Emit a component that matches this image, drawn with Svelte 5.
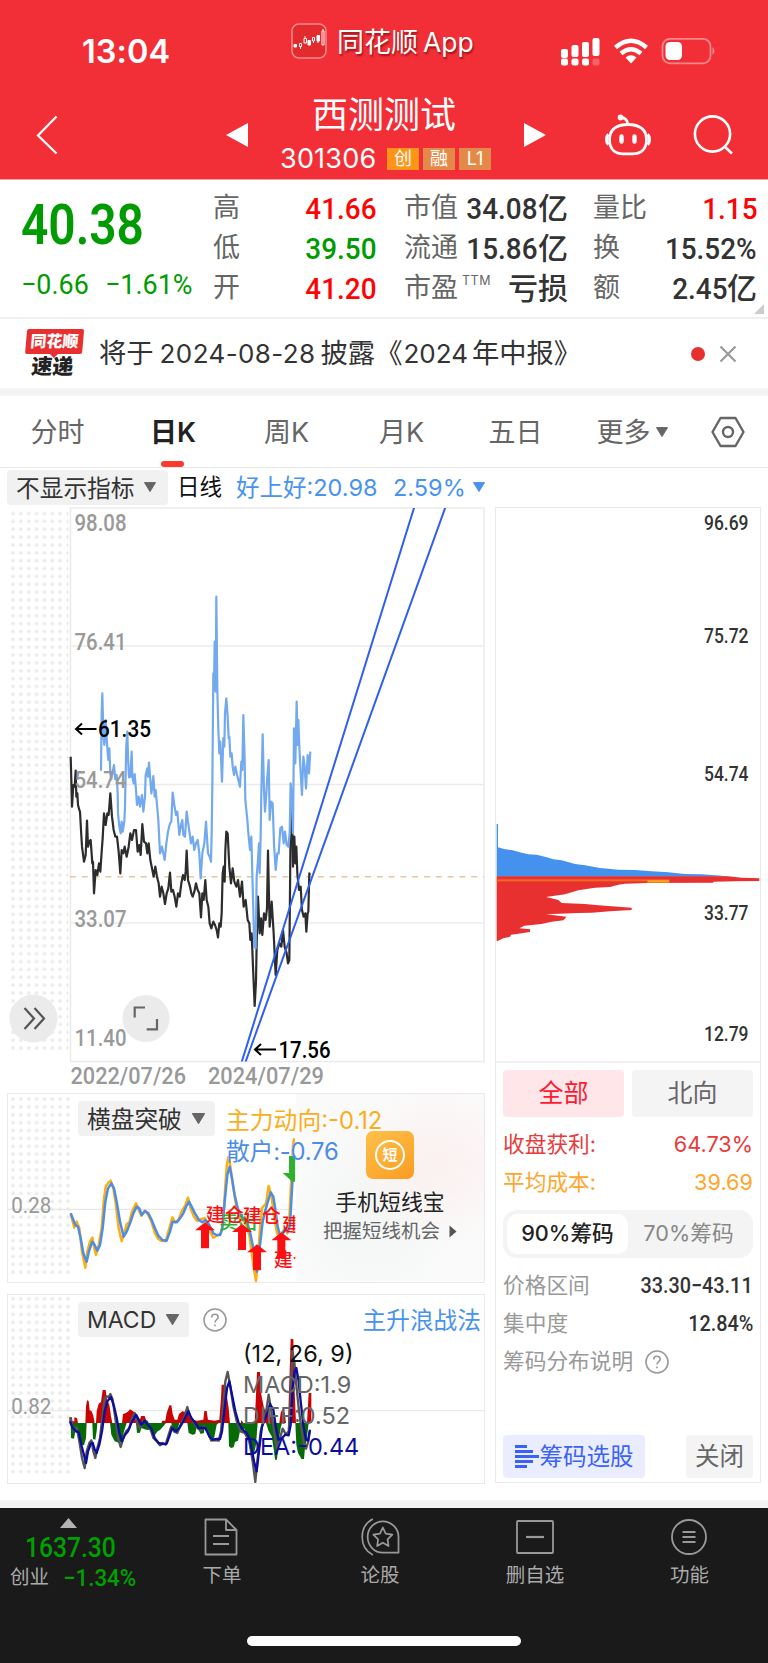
<script>
	const quoteColumns = [
		[
			{ label: '高', value: '41.66', tone: 'up' },
			{ label: '低', value: '39.50', tone: 'down' },
			{ label: '开', value: '41.20', tone: 'up' }
		],
		[
			{ label: '市值', value: '34.08', unit: '亿' },
			{ label: '流通', value: '15.86', unit: '亿' },
			{ label: '市盈', sup: 'TTM', value: '', unit: '亏损' }
		],
		[
			{ label: '量比', value: '1.15', tone: 'up' },
			{ label: '换', value: '15.52%' },
			{ label: '额', value: '2.45', unit: '亿' }
		]
	];

	const tabs = ['分时', '日K', '周K', '月K', '五日', '更多'];
	let activeTab = '日K';

	const priceLabels = [
		['98.08', 530.5],
		['76.41', 649.5],
		['54.74', 788],
		['33.07', 926.5],
		['11.40', 1045.5]
	];
	const chipLabels = [
		['96.69', 530],
		['75.72', 642.5],
		['54.74', 781],
		['33.77', 919.5],
		['12.79', 1040.5]
	];

	// series are stored in a 3x grid, each chart scales them down
	const blueSeries =
		'123,812 125,640 127,580 130,700 133,735 137,660 141,730 145,780 148,745 151,820 154,838 158,815 162,795 166,838 170,825 173,880 174,940 178,980 182,1000 185,965 188,995 193,965 195,920 197,820 199,735 202,695 204,770 207,832 211,830 215,755 217,830 221,850 224,822 228,870 231,915 236,890 240,920 246,885 250,935 255,890 257,825 262,805 264,830 267,788 271,840 274,880 277,860 280,828 284,890 287,870 291,915 295,960 300,1060 306,1040 314,1080 319,1030 324,995 330,970 334,965 338,878 343,915 348,945 352,935 358,1005 363,975 367,960 370,1005 375,1010 380,935 384,965 389,1000 393,1030 398,1010 403,1050 408,1030 413,1020 418,1060 422,1135 427,1060 433,1030 438,965 444,1060 449,1070 453,1085 455,1000 457,860 460,520 462,570 464,425 467,575 469,290 472,570 475,690 478,760 481,725 486,845 490,715 493,740 495,640 499,595 503,650 506,715 508,710 511,770 515,760 518,800 522,825 526,800 530,820 535,840 540,860 544,785 547,810 550,645 554,780 556,900 562,960 566,1010 570,1050 574,1010 578,1160 583,1340 587,1345 590,1130 594,1080 597,1030 599,1120 602,1010 604,880 608,703 612,870 615,935 619,880 622,830 626,780 629,960 633,905 638,910 642,1030 647,1110 652,1060 656,1060 661,985 666,980 671,1030 675,995 680,1035 685,1040 689,1000 692,850 696,900 699,1000 702,685 706,790 710,605 713,735 715,660 718,740 721,800 726,885 730,770 734,800 738,865 743,765 747,820 751,755';
	const closeSeries =
		'32,770 34,840 36,920 40,855 44,860 47,812 49,890 52,880 54,915 58,930 60,935 63,990 66,1040 72,1085 77,1065 81,962 84,1040 88,1025 92,1020 97,1090 99,1085 102,1180 107,1110 112,1125 117,1090 121,1115 125,1055 128,1015 132,940 137,975 142,940 146,945 151,880 156,950 161,990 166,1010 171,1010 176,1055 181,1120 185,1050 190,1060 194,1040 200,1070 206,1040 211,1000 216,1020 222,990 228,990 233,1055 238,1035 242,1065 247,972 252,1025 258,1030 262,1060 266,1030 271,1080 276,1105 281,1130 286,1100 291,1130 296,1150 300,1190 305,1160 310,1180 315,1212 320,1180 325,1165 330,1118 334,1175 339,1170 344,1190 349,1220 354,1180 359,1190 364,1150 369,1125 374,1140 377,1115 380,1052 384,1140 390,1160 394,1180 398,1190 403,1175 408,1150 413,1170 418,1180 423,1252 427,1180 431,1200 436,1140 440,1200 445,1220 449,1270 454,1285 460,1265 465,1275 470,1290 474,1312 478,1270 482,1280 485,1240 488,1120 491,1100 494,1145 496,1050 499,995 503,1000 508,1100 513,1150 518,1105 523,1145 529,1160 534,1140 540,1190 546,1145 551,1220 557,1200 563,1260 568,1270 571,1320 575,1300 579,1400 584,1518 588,1445 590,1330 594,1190 599,1300 603,1255 607,1305 612,1240 617,1260 621,1225 624,1052 629,1280 635,1205 641,1300 647,1425 652,1350 658,1330 664,1340 669,1290 674,1340 680,1360 684,1390 688,1380 690,1180 692,960 696,915 699,1100 703,1010 706,1090 709,1040 712,1120 717,1170 722,1160 726,1230 731,1250 736,1240 739,1295 743,1240 745,1235 748,1120 750,1125';
	const retailLine =
		'212,385 218,400 226,420 234,425 242,460 250,505 260,530 268,495 277,470 284,480 292,497 300,480 308,430 316,350 324,310 334,295 342,310 350,350 360,410 371,455 380,440 390,415 400,385 410,365 418,370 425,390 435,378 445,385 455,405 465,430 475,452 487,465 500,467 510,440 518,410 530,412 540,400 550,385 558,365 567,350 575,365 585,385 597,405 607,412 617,405 628,420 640,445 650,450 660,450 667,430 674,350 682,270 689,245 696,280 704,330 712,365 720,390 730,400 740,410 750,440 760,490 771,560 780,480 788,410 795,380 805,345 812,322 820,335 827,380 833,425 840,450 848,445 856,430 863,440 870,420 875,330 880,240 886,210';
	const mainLine =
		'212,385 217,405 223,428 230,410 238,430 246,500 256,548 262,500 270,470 277,458 283,490 288,510 296,480 305,430 312,340 317,305 325,293 332,287 340,310 348,360 356,430 365,468 374,440 380,418 388,412 396,380 408,355 416,375 424,392 435,377 445,390 455,412 465,445 475,462 485,468 497,468 508,430 517,397 526,412 535,405 545,380 556,360 564,338 572,370 582,395 592,408 603,402 615,400 625,430 640,458 655,450 663,445 670,400 676,300 681,235 686,215 692,250 700,310 710,370 720,400 735,410 748,450 760,540 768,588 774,520 780,430 786,370 798,355 806,303 814,330 822,390 830,440 838,460 848,440 855,430 862,445 868,400 874,280 879,180 883,160';
	const diffLine =
		'212,398 216,420 222,440 230,428 238,470 246,520 254,550 260,500 268,475 274,467 280,500 286,520 292,490 300,460 308,390 314,340 320,335 326,338 331,328 338,345 346,400 354,460 362,487 370,460 378,440 388,430 396,400 404,385 412,420 420,432 430,408 440,410 450,430 460,460 472,472 480,482 488,475 497,480 506,450 514,425 522,440 532,445 540,425 552,400 562,367 570,395 580,410 592,430 602,437 612,425 622,440 634,468 645,466 656,468 663,440 670,360 676,290 683,262 690,300 700,365 710,410 722,440 734,445 748,470 758,530 766,592 773,520 782,440 792,405 800,370 806,330 814,380 822,440 830,490 840,460 848,432 858,450 866,440 871,370 877,200 883,230 888,290 896,370 904,430 911,475 918,492 925,470 929,440';
	const deaLine =
		'210,410 218,430 228,440 236,442 244,480 258,535 264,500 272,478 278,474 284,495 290,505 298,480 306,440 314,380 322,350 333,337 342,365 350,400 358,445 366,470 374,452 384,440 394,415 408,390 416,405 424,420 434,408 444,420 454,432 464,460 476,475 487,478 500,477 508,455 516,430 528,440 538,430 550,410 565,380 574,400 584,412 596,430 606,430 616,430 628,455 638,465 650,463 660,463 666,440 674,370 681,310 688,290 696,330 706,380 716,415 728,435 740,445 750,465 762,530 770,560 778,490 786,425 796,400 804,380 810,358 820,375 828,430 836,465 846,460 856,450 866,452 872,420 878,310 884,260 889,250 896,290 902,350 910,420 918,465 924,468 930,435';
	const macdUp =
		'208,415 208,398 215,398 215,410 223,410 223,398 231,400 234,415 256,415 258,365 261,347 266,349 269,377 275,380 280,393 284,415 288,415 290,380 296,357 303,352 308,316 317,316 321,345 328,360 333,395 337,415 366,415 369,388 378,385 386,379 390,374 397,378 405,384 412,395 420,405 423,394 434,394 438,405 446,415 484,415 487,408 496,408 500,385 508,362 514,362 518,388 524,405 532,405 537,388 547,380 556,382 563,372 568,390 576,405 592,408 610,405 613,379 620,379 624,405 644,408 658,405 663,340 665,300 674,300 678,318 686,370 690,415 722,415 724,406 730,415 764,415 768,330 771,262 780,262 784,330 792,370 798,385 815,392 818,415 838,415 842,385 849,370 854,385 858,415 864,415 868,290 872,162 880,164 884,320 888,415 921,415 924,360 926,325 934,325 934,415';
	const macdDown =
		'212,415 213,460 222,462 226,440 238,440 243,480 252,482 258,460 260,415 277,415 279,463 286,465 290,440 292,415 330,415 334,450 344,470 358,475 366,470 372,440 380,415 408,415 411,445 420,444 424,430 438,435 455,437 462,455 473,440 480,436 490,425 498,415 514,415 518,438 526,442 534,430 538,415 562,415 566,445 578,450 586,448 590,425 602,448 612,445 614,425 628,455 642,462 650,420 656,415 685,415 687,485 693,490 701,488 705,472 714,468 720,440 734,432 745,470 752,500 760,515 768,480 773,415 798,415 806,440 815,455 822,500 825,525 831,525 836,470 842,430 846,415 886,415 889,480 894,505 900,515 904,523 912,523 915,490 922,450 926,415';

	const buyArrows = [
		[615, 412],
		[726, 417],
		[771, 478],
		[844, 442]
	];
	const buyLabels = [
		[617, 410],
		[728, 415],
		[846, 440],
		[821, 547]
	];

	const arrowPath = 'M0 0L30 24H12V78H-12V24H-30Z';
</script>

{#snippet caret(size, color)}
	<svg class="caret" width={size} height={size * 0.85} viewBox="0 0 12 10">
		<path d="M0.5 0.5H11.5L6 9.5Z" fill={color} stroke={color} stroke-linejoin="round" />
	</svg>
{/snippet}

{#snippet help()}
	<svg width="24" height="24" viewBox="0 0 24 24" fill="none" stroke="#999" stroke-width="1.6">
		<circle cx="12" cy="12" r="11" />
		<path d="M8.7 9.4C8.7 5.2 15.2 5.4 15.2 9.2C15.2 11.6 12 11.7 12 14.4M12 16.4V18.2" />
	</svg>
{/snippet}

<div class="page">
	<header>
		<div class="status">
			<span class="time">13:04</span>
			<div class="app">
				<svg width="36" height="36" viewBox="0 0 36 36">
					<rect x="1" y="1" width="34" height="34" rx="7" fill="#e32a2d" stroke="#f68b8e" stroke-width="1.5" />
					<g fill="#fff" stroke="#fff">
						<path d="M3 21.5H5.5V24H3ZM17 17.5H19.5V22H17ZM26 12.5H28.5V18H26Z" />
						<path d="M8.5 20.5H10.5V23.5H8.5ZM13 15.5H15.5V20H13ZM21.5 14.5H23.5V18H21.5ZM31 8H33V22H31Z" fill="none" />
						<path d="M9.5 24V26M14 13V15.5M22.5 18V20M27 18V20M32 6V8" />
					</g>
				</svg>
				<span>同花顺<b>App</b></span>
			</div>
			<svg class="signals" width="156" height="30" viewBox="0 0 156 30">
				<g fill="#fff">
					<rect x="1" y="12" width="7" height="9" rx="2" />
					<rect x="11.5" y="9" width="7" height="12" rx="2" transform="translate(0 -1)" />
					<rect x="22" y="5" width="7" height="15" rx="2" />
					<rect x="32.5" y="1" width="7" height="18" rx="2" />
					<rect x="1" y="21.5" width="7" height="7" rx="2" />
					<rect x="11.5" y="21.5" width="7" height="7" rx="2" />
					<rect x="22" y="21.5" width="7" height="7" rx="2" />
					<rect x="32.5" y="21.5" width="7" height="7" rx="2" opacity="0.25" />
				</g>
				<g fill="none" stroke="#fff" stroke-width="4.4">
					<path d="M55.5 10.5Q71 -3 86.500 10.5" />
					<path d="M61 16.5Q71 8 81 16.5" />
				</g>
				<path d="M65.5 20.5Q71 16 76.500 20.500L71 26.500Z" fill="#fff" />
				<rect x="102.500" y="1.800" width="48" height="24.500" rx="7.500" fill="none" stroke="#f7878b" stroke-width="1.800" />
				<rect x="105.500" y="5" width="16.500" height="18" rx="4.500" fill="#fff" />
				<path d="M152.500 10Q156.500 14 152.500 18Z" fill="#f7878b" />
			</svg>
		</div>
		<nav>
			<svg class="back" width="22" height="40" viewBox="0 0 22 40"><path d="M20.500 1.500L2 20.500L20.500 38.500" fill="none" stroke="#fff" stroke-width="2.200" /></svg>
			<svg class="prev" width="22" height="24" viewBox="0 0 22 24"><path d="M0 12L22 0V24Z" fill="#fff" /></svg>
			<div class="stock">
				<h1>西测测试</h1>
				<div class="code">
					<span>301306</span>
					<i class="hot">创</i><i>融</i><i>L1</i>
				</div>
			</div>
			<svg width="22" height="24" viewBox="0 0 22 24"><path d="M22 12L0 0V24Z" fill="#fff" /></svg>
			<svg class="robot" width="46" height="42" viewBox="0 0 46 42" fill="none" stroke="#fff" stroke-width="2.800">
				<path d="M23 10.500C11 10.500 4.500 16 4.500 25.500C4.500 35 10 39.800 18 39.800H28C36 39.800 41.500 35 41.500 25.500C41.500 16 35 10.500 23 10.500Z" />
				<path d="M22.500 10.500C23 6.500 20.500 4 16 3.500" stroke-linecap="round" />
				<circle cx="15.500" cy="3.400" r="2.800" fill="#fff" stroke="none" />
				<path d="M3.500 20.500C0.800 22 0.800 29 3.500 30.500M42.500 20.500C45.200 22 45.200 29 42.500 30.500" />
				<path d="M16.500 22.500V27.500M29.500 22.500V27.500" stroke-width="4.400" stroke-linecap="round" />
			</svg>
			<svg class="search" width="42" height="42" viewBox="0 0 42 42" fill="none" stroke="#fff" stroke-width="2.600">
				<circle cx="19.500" cy="20" r="17.600" />
				<path d="M31.500 32.500L39 39.500" />
			</svg>
		</nav>
	</header>

	<section class="quote">
		<div class="last">
			<span class="din price">40.38</span>
			<div class="change"><span class="din">−0.66</span><span class="din">−1.61%</span></div>
		</div>
		{#each quoteColumns as column}
			<div class="col">
				{#each column as row}
					<div class="row">
						<span class="label">{row.label}{#if row.sup}<sup>{row.sup}</sup>{/if}</span>
						<span class="value {row.tone ?? ''}"><span class="din">{row.value}</span>{row.unit ?? ''}</span>
					</div>
				{/each}
			</div>
		{/each}
		<svg class="corner" width="10" height="10" viewBox="0 0 10 10"><path d="M10 0V10H0Z" fill="#ccc" /></svg>
	</section>

	<section class="news">
		<div class="badge">
			<span class="badge-top">同花顺</span>
			<span class="badge-bottom">速递</span>
		</div>
		<p>将于<span class="date">2024-08-28</span>披露<span class="book">《</span><span class="year">2024</span>年中报》</p>
		<span class="dot"></span>
		<svg width="18" height="18" viewBox="0 0 18 18"><path d="M1.500 1.500L16.500 16.500M16.500 1.500L1.500 16.500" stroke="#999" stroke-width="2.200" /></svg>
	</section>

	<div class="tabs">
		{#each tabs as tab}
			<button class:active={tab === activeTab} on:click={() => (activeTab = tab)}>
				{tab}{#if tab === '更多'}{@render caret(12, '#666')}{/if}
			</button>
		{/each}
		<svg width="34" height="32" viewBox="0 0 34 32" fill="none" stroke="#666" stroke-width="2.400" stroke-linejoin="round">
			<path d="M9.500 2H24.500L32.500 16L24.500 30H9.500L1.500 16Z" />
			<circle cx="17" cy="16" r="5" />
		</svg>
	</div>

	<div class="indicator">
		<button class="pill">不显示指标{@render caret(12, '#666')}</button>
		<span class="period">日线</span>
		<span class="signal">好上好:20.98</span>
		<span class="signal pct">2.59%</span>
		{@render caret(12, '#4793f0')}
	</div>

	<main>
		<div class="left">
			<div class="panel">
				<svg width="478" height="583" viewBox="7 507 478 583">
					<defs>
						<pattern id="dots" x="9" y="509.500" width="7.860" height="7.860" patternUnits="userSpaceOnUse">
							<circle cx="4" cy="4" r="1.900" fill="#ebebeb" />
						</pattern>
						<clipPath id="price-clip"><rect x="69" y="508" width="416" height="553.500" /></clipPath>
					</defs>
					<rect x="9" y="509.500" width="59.500" height="543" fill="url(#dots)" />
					<g stroke="#ebebeb" stroke-width="1.500" fill="none">
						<rect x="70.500" y="508" width="413.500" height="553.500" />
						<path d="M70 646H484M70 784.500H484M70 923H484" />
					</g>
					<path d="M70 876.700H484" stroke="#e8c79b" stroke-width="1.400" stroke-dasharray="6 5.800" />
					<g transform="translate(60 500) scale(0.33333)" fill="none" stroke-width="6.600" stroke-linejoin="round">
						<polyline points={closeSeries} stroke="#2c2c2c" />
						<polyline points={blueSeries} stroke="#72a9ef" />
					</g>
					<g class="axis">
						{#each priceLabels as [text, y]}
							<text x="74.500" {y} textLength="52" lengthAdjust="spacingAndGlyphs">{text}</text>
						{/each}
						<text x="70.500" y="1084" textLength="115.500" lengthAdjust="spacingAndGlyphs">2022/07/26</text>
						<text x="208" y="1084" textLength="116" lengthAdjust="spacingAndGlyphs">2024/07/29</text>
					</g>
					<g clip-path="url(#price-clip)" stroke="#2f5ff0" stroke-width="2">
						<path d="M241.700 1062L414.300 507M245.500 1062L445.500 507" />
					</g>
					<circle cx="146" cy="1018.500" r="23.500" fill="#ebebeb" />
					<path d="M134.700 1017.500V1007.500H145M146.700 1029.300H157V1019" fill="none" stroke="#666" stroke-width="2.200" />
					<circle cx="33.500" cy="1018.500" r="24" fill="#ebebeb" />
					<path d="M24.500 1008L34 1018.500L24.500 1029M34.500 1008L44 1018.500L34.500 1029" fill="none" stroke="#555" stroke-width="2.200" />
					<g class="mark">
						<path d="M96.500 729H76M82 723.500L76 729L82 734.500" />
						<text x="98" y="737" textLength="53" lengthAdjust="spacingAndGlyphs">61.35</text>
						<path d="M276 1049.500H255M261 1044L255 1049.500L261 1055" />
						<text x="278.500" y="1057.500" textLength="52" lengthAdjust="spacingAndGlyphs">17.56</text>
					</g>
				</svg>
			</div>

			<div class="panel sub">
				<svg width="478" height="190" viewBox="21 24 1434 570">
					<defs>
						<pattern id="dots-sub" x="27" y="30" width="23.600" height="23.600" patternUnits="userSpaceOnUse">
							<circle cx="12" cy="12" r="5.700" fill="#ebebeb" />
						</pattern>
						<clipPath id="flow-clip"><rect x="21" y="24" width="865" height="568" /></clipPath>
					</defs>
					<rect x="27" y="30" width="189" height="543" fill="url(#dots-sub)" />
					<path d="M22 373H886" stroke="#e8e8e8" stroke-width="4" />
					<text class="sub-axis" x="34" y="383" textLength="120" lengthAdjust="spacingAndGlyphs">0.28</text>
					<g clip-path="url(#flow-clip)">
						<g fill="none" stroke-width="7.500" stroke-linejoin="round">
							<polyline points={mainLine} stroke="#ffae0d" />
							<polyline points={retailLine} stroke="#4c8de8" />
						</g>
						<text class="flow-text" x="658" y="432" fill="#2fb12f">卖出</text>
						<path d="M867 213H886V290H877L848 264H867Z" fill="#2fb12f" />
						{#each buyArrows as [x, y]}
							<path d={arrowPath} transform="translate({x} {y})" fill="#fb0f12" />
						{/each}
						{#each buyLabels as [x, y]}
							<text class="flow-text" {x} {y} fill="#fb0f12">建仓</text>
						{/each}
					</g>
				</svg>
				<div class="promo">
					<span class="coin"><em>短</em></span>
					<strong>手机短线宝</strong>
					<small>把握短线机会<svg width="8" height="13" viewBox="0 0 8 13"><path d="M0.500 0.500L7.500 6.500L0.500 12.500Z" fill="#555" /></svg></small>
				</div>
				<div class="tools">
					<button class="pill">横盘突破{@render caret(13, '#666')}</button>
				</div>
				<div class="legend flow">
					<span style:color="#faae1e">主力动向:-0.12</span>
					<span class="retail" style:color="#4c8de8">散户:-0.76</span>
				</div>
			</div>

			<div class="panel sub macd">
				<svg width="478" height="190" viewBox="21 28 1434 570">
					<rect x="27" y="30" width="189" height="547" fill="url(#dots-sub)" />
					<path d="M22 378H1455" stroke="#e8e8e8" stroke-width="4" />
					<text class="sub-axis" x="34" y="387" textLength="120" lengthAdjust="spacingAndGlyphs">0.82</text>
					<polygon points={macdUp} fill="#c90303" />
					<polygon points={macdDown} fill="#066b06" />
					<g fill="none" stroke-width="7" stroke-linejoin="round">
						<polyline points={diffLine} stroke="#555" />
						<polyline points={deaLine} stroke="#0d0d9c" />
					</g>
				</svg>
				<div class="tools">
					<button class="pill macd-pill">MACD{@render caret(13, '#666')}</button>
					{@render help()}
					<a href="#top">主升浪战法</a>
				</div>
				<div class="legend values">
					<span style:color="#111">(12, 26, 9)</span>
					<span style:color="#666">MACD:1.9</span>
					<span style:color="#666">DIFF:0.52</span>
					<span style:color="#0d0d9c">DEA:-0.44</span>
				</div>
			</div>
		</div>

		<aside>
			<svg width="264" height="553" viewBox="496 508 264 553">
				<g class="chip-axis">
					{#each chipLabels as [text, y]}
						<text x="704" {y} textLength="44.500" lengthAdjust="spacingAndGlyphs">{text}</text>
					{/each}
				</g>
				<g transform="translate(485 800) scale(0.33333)">
					<polygon fill="#4591ee" points="35,72 39,72 39,142 60,148 80,150 110,158 130,163 155,164 185,172 205,178 230,181 270,192 300,196 345,204 400,209 450,210 500,214 550,217 600,222 650,223 710,227 730,230 35,230" />
					<polygon fill="#e83030" points="35,229 730,229 770,233 823,235 823,243 750,244 685,245 685,248 487,249 420,251 400,254 375,261 330,263 280,271 240,283 183,291 220,300 230,309 300,312 340,316 440,323 440,330 375,334 320,338 280,339 183,343 245,350 235,361 200,365 170,372 118,377 103,385 135,388 135,396 100,401 78,404 75,410 55,415 38,423 35,423" />
					<rect x="35" y="238" width="452" height="6" fill="#f06a20" />
					<rect x="487" y="239" width="66" height="9" fill="#fba01c" />
				</g>
			</svg>
			<div class="chips">
				<div class="scope">
					<button class="on">全部</button>
					<button>北向</button>
				</div>
				<div class="line red"><span>收盘获利:</span><span>64.73%</span></div>
				<div class="line orange"><span>平均成本:</span><span>39.69</span></div>
				<div class="segment">
					<button class="on">90%筹码</button>
					<button>70%筹码</button>
				</div>
				<div class="line"><span>价格区间</span><b class="din">33.30−43.11</b></div>
				<div class="line"><span>集中度</span><b class="din">12.84%</b></div>
				<div class="line note"><span>筹码分布说明</span>{@render help()}</div>
				<div class="actions">
					<button class="pick">
						<svg width="24" height="23" viewBox="0 0 24 23" stroke="#3a62f5" stroke-width="2.800"><path d="M0 1.500H12M0 6.500H18M0 11.500H24M0 16.500H18M0 21.500H12" /></svg>筹码选股
					</button>
					<button class="close">关闭</button>
				</div>
			</div>
		</aside>
	</main>

	<footer>
		<div class="bar">
			<div class="index">
				<svg width="17" height="10" viewBox="0 0 17 10"><path d="M8.500 0L17 10H0Z" fill="#b3b3b3" /></svg>
				<span class="din point">1637.30</span>
				<div><span>创业</span><span class="din">−1.34%</span></div>
			</div>
			<div class="item">
				<svg width="40" height="38" viewBox="0 0 40 38">
					<path d="M3.500 1.500H24L34.500 12V36.500H3.500ZM24 1.500V12H34.500M11 18H27M11 26H27" />
				</svg>
				<span>下单</span>
			</div>
			<div class="item">
				<svg width="42" height="40" viewBox="0 0 42 40">
					<path d="M24 3.500C15 3.500 8 11 8 20C8 29 15 36.500 24 36.500H40.500V20C40.500 11 33 3.500 24 3.500Z" />
					<path d="M13.500 1C-1.500 9 -1.500 31 13.500 39" />
					<path d="M24 10L27 16.500L34 17.500L29 22.500L30 29.500L24 26L18 29.500L19 22.500L14 17.500L21 16.500Z" />
				</svg>
				<span>论股</span>
			</div>
			<div class="item">
				<svg width="40" height="38" viewBox="0 0 40 38">
					<rect x="2" y="3" width="36" height="32" rx="1" />
					<path d="M11 19H29" stroke-width="2.200" />
				</svg>
				<span>删自选</span>
			</div>
			<div class="item">
				<svg width="40" height="38" viewBox="0 0 40 38">
					<circle cx="19" cy="19" r="17" />
					<path d="M12.500 14H25.500M12.500 19H25.500M12.500 24H25.500" />
				</svg>
				<span>功能</span>
			</div>
		</div>
		<div class="home"></div>
	</footer>
</div>

<style>
	:global(body) {
		background: #fff;
	}

	.page {
		width: 768px;
		height: 1663px;
		overflow: hidden;
		display: flex;
		flex-direction: column;
		box-sizing: border-box;
		background: #fff;
		color: #333;
		font-family: Inter, 'Noto Sans CJK SC', sans-serif;
		line-height: 1;
	}

	.page :global(*) {
		box-sizing: border-box;
	}

	svg {
		display: block;
		flex: none;
	}

	button {
		border: none;
		padding: 0;
		margin: 0;
		background: none;
		font: inherit;
		color: inherit;
		white-space: nowrap;
	}

	.din {
		display: inline-block;
		font-family: Roboto, 'Noto Sans CJK SC', sans-serif;
		font-weight: 500;
		transform: scaleX(0.93);
		transform-origin: right center;
	}

	/* header */
	header {
		height: 180px;
		background: #f22f37;
		border-bottom: 1px solid #f8a5a9;
		color: #fff;
	}

	.status {
		display: flex;
		height: 90px;
		padding: 23px 0 0 82px;
	}

	.time {
		width: 209px;
		padding-top: 13px;
		font-size: 32.5px;
		font-weight: 600;
		letter-spacing: 0.1px;
	}

	.app {
		display: flex;
		gap: 10px;
		width: 269px;
		font-size: 27px;
	}

	.app span {
		line-height: 38px;
		text-shadow: 1px 2px 2px rgba(90, 0, 0, 0.6);
	}

	.app b {
		margin-left: 5px;
		font-weight: 400;
		font-size: 26.5px;
	}

	.signals {
		margin-top: 14px;
	}

	nav {
		display: flex;
		align-items: center;
		height: 89px;
		padding-left: 36px;
	}

	.prev {
		margin-left: 168px;
	}

	.stock {
		width: 276px;
		height: 89px;
		padding-top: 5px;
		text-align: center;
	}

	h1 {
		margin: 0 4px 0 0;
		font-size: 36px;
		font-weight: 400;
		line-height: 40px;
	}

	.code {
		display: flex;
		align-items: center;
		gap: 4px;
		margin: 9px 0 0 32px;
		font-size: 27px;
		line-height: 30px;
		height: 30px;
	}

	.code span {
		width: 103px;
		text-align: left;
		letter-spacing: 0.2px;
	}

	.code i {
		width: 32px;
		height: 22px;
		background: #e48a48;
		font-size: 18px;
		line-height: 22px;
		font-style: normal;
	}

	.code .hot {
		background: #ff9419;
	}

	.robot {
		margin-left: 59px;
	}

	.search {
		margin-left: 42px;
	}

	/* quote */
	.quote {
		position: relative;
		display: flex;
		height: 139px;
		padding: 8px 0 0 21px;
		border-bottom: 2px solid #f0f0f0;
	}

	.last {
		flex: none;
		width: 192px;
		color: #009b00;
	}

	.last .din {
		transform-origin: left center;
	}

	.price {
		margin-top: 9px;
		font-size: 55px;
		font-weight: 600;
		line-height: 56px;
		transform: scaleX(0.87);
	}

	.change {
		display: flex;
		gap: 13px;
		margin-top: 16px;
		font-size: 28px;
		line-height: 32px;
		white-space: nowrap;
	}

	.change .din {
		font-weight: 400;
		transform: scaleX(0.96);
	}

	.col {
		flex: none;
		width: 164px;
		margin-right: 27px;
	}

	.col:nth-child(3) {
		margin-right: 25px;
	}

	.row {
		display: flex;
		justify-content: space-between;
		height: 40px;
		line-height: 40px;
		white-space: nowrap;
	}

	.label {
		font-size: 27px;
		color: #666;
	}

	sup {
		position: relative;
		top: -12px;
		margin-left: 4px;
		font-size: 12.5px;
		letter-spacing: 0.5px;
		vertical-align: baseline;
		line-height: 0;
	}

	.value {
		font-size: 30px;
		font-weight: 500;
	}

	.value .din {
		font-size: 30px;
	}

	.up {
		color: #fd0404;
	}

	.down {
		color: #009b00;
	}

	.corner {
		position: absolute;
		right: 4px;
		bottom: 3px;
	}

	/* news */
	.news {
		display: flex;
		align-items: center;
		height: 77px;
		padding-left: 25px;
		border-bottom: 8px solid #f4f4f4;
	}

	.badge {
		width: 57px;
		margin-right: 17px;
		font-weight: 900;
		text-align: center;
		transform: skewX(-5deg);
		line-height: 25px;
	}

	.badge span {
		display: block;
		white-space: nowrap;
	}

	.badge-top {
		position: relative;
		height: 25px;
		border-radius: 2px;
		background: #e83030;
		color: #fff;
		font-size: 16px;
	}

	.badge-top::after {
		content: '';
		position: absolute;
		left: 25px;
		top: 25px;
		border: 4px solid transparent;
		border-top-color: #e83030;
		border-bottom: none;
	}

	.badge-bottom {
		color: #222;
		font-size: 21px;
	}

	.news p {
		width: 592px;
		margin: 0;
		font-size: 27.3px;
		white-space: nowrap;
	}

	.date {
		margin: 0 5px 0 6px;
		font-size: 26px;
		letter-spacing: 0.4px;
	}

	.book {
		margin-left: 0;
	}

	.year {
		margin: 0 4px 0 1px;
		font-size: 26px;
	}

	.dot {
		width: 14px;
		height: 14px;
		margin-right: 14px;
		border-radius: 50%;
		background: #e83030;
	}

	/* tabs */
	.tabs {
		display: grid;
		grid-template-columns: 115px 116px 111px 119px 109px 124px 67px;
		align-items: center;
		justify-items: center;
		height: 72px;
		border-bottom: 1px solid #e9e9e9;
		font-size: 27px;
		color: #666;
	}

	.tabs button {
		position: relative;
		display: flex;
		align-items: center;
		height: 71px;
		padding-top: 2px;
	}

	.tabs button :global(.caret) {
		margin-left: 5px;
	}

	.tabs .active {
		color: #222;
		font-weight: 600;
	}

	.tabs .active::after {
		content: '';
		position: absolute;
		left: calc(50% - 12px);
		bottom: 0;
		width: 23px;
		height: 6px;
		border-radius: 3px;
		background: #fc3a2d;
	}

	.indicator {
		display: flex;
		align-items: center;
		height: 39px;
		padding-left: 7px;
		font-size: 22.5px;
	}

	.pill {
		display: flex;
		align-items: center;
		height: 35px;
		padding: 2px 10px 0 9px;
		border-radius: 4px;
		background: #f1f1f1;
		font-size: 23.7px;
	}

	.pill :global(.caret) {
		margin: -2px 0 0 10px;
	}

	.indicator .pill {
		width: 161px;
	}

	.period {
		margin: 0 14px 0 9px;
		color: #111;
	}

	.signal {
		color: #4793f0;
		width: 157px;
		font-size: 23.5px;
		white-space: nowrap;
	}

	.pct {
		width: 80px;
	}

	/* charts */
	main {
		display: flex;
		gap: 10px;
		padding-left: 7px;
		height: 993px;
	}

	.left {
		width: 478px;
	}

	.panel {
		position: relative;
	}

	.sub {
		margin-top: 3px;
		height: 190px;
		outline: 1.5px solid #e9e9e9;
		outline-offset: -1.5px;
	}

	.macd {
		margin-top: 11px;
	}

	.axis text,
	.sub-axis {
		font: 500 23.5px Roboto, sans-serif;
		fill: #999;
	}

	.sub-axis {
		font-weight: 400;
		font-size: 68px;
	}

	.mark text {
		font: 500 23.5px Roboto, sans-serif;
		fill: #000;
	}

	.mark path {
		fill: none;
		stroke: #000;
		stroke-width: 2;
	}

	.chip-axis text {
		font: 500 19.5px Roboto, sans-serif;
		fill: #333;
	}

	.flow-text {
		font: 500 57px 'Noto Sans CJK SC', sans-serif;
	}

	.tools {
		position: absolute;
		top: 8px;
		left: 71px;
		right: 4px;
		display: flex;
		align-items: center;
	}

	.tools .pill {
		margin-right: 14px;
	}

	.tools .macd-pill {
		width: 111px;
		font-size: 23px;
	}

	.tools a {
		margin-left: auto;
		padding-top: 3px;
		color: #4793f0;
		font-size: 23.7px;
		text-decoration: none;
	}

	.legend {
		position: absolute;
		display: flex;
		flex-direction: column;
		font-size: 23.8px;
		line-height: 31px;
		white-space: pre;
	}

	.flow {
		top: 12px;
		left: 219px;
	}

	.retail {
		letter-spacing: -0.2px;
	}

	.values {
		top: 44px;
		left: 236px;
		font-size: 23.5px;
	}

	.promo {
		position: absolute;
		top: 1px;
		right: 1px;
		display: flex;
		flex-direction: column;
		align-items: center;
		width: 188px;
		height: 187px;
		padding: 37px 0 0 0;
		background:
			radial-gradient(ellipse at 75% 38%, rgba(253, 238, 238, 0.8), transparent 50%),
			radial-gradient(ellipse at 40% 65%, rgba(240, 246, 243, 0.8), transparent 60%),
			#fafafa;
	}

	.coin {
		display: flex;
		align-items: center;
		justify-content: center;
		width: 48px;
		height: 48px;
		border-radius: 7px;
		background: linear-gradient(145deg, #fec14a, #fa9c22);
	}

	.coin em {
		width: 30px;
		height: 30px;
		border: 2px solid #fff;
		border-radius: 50%;
		color: #fff;
		font-size: 15px;
		font-weight: 700;
		font-style: normal;
		line-height: 26px;
		text-align: center;
	}

	.promo strong {
		margin-top: 10px;
		font-size: 21.9px;
		font-weight: 400;
		line-height: 26px;
		color: #222;
	}

	.promo small {
		display: flex;
		align-items: center;
		gap: 9px;
		margin-top: 4px;
		font-size: 19.5px;
		line-height: 24px;
		color: #666;
	}

	/* chip distribution */
	aside {
		width: 266px;
		height: 976px;
		border: 1px solid #e9e9e9;
	}

	.chips {
		border-top: 2px solid #efefef;
		padding: 7px 7px 0 7px;
	}

	.scope,
	.actions {
		display: flex;
		justify-content: space-between;
	}

	.scope button {
		width: 121px;
		height: 47px;
		border-radius: 4px;
		background: #f4f4f4;
		color: #666;
		font-size: 25px;
	}

	.scope .on {
		background: #ffe7e9;
		color: #fb1b33;
	}

	.scope {
		margin-bottom: 9px;
	}

	.line {
		display: flex;
		justify-content: space-between;
		align-items: center;
		height: 38px;
		font-size: 21.7px;
		color: #999;
		white-space: nowrap;
	}

	.line b {
		color: #333;
		font-size: 22px;
		transform: scaleX(0.9);
	}

	.red {
		color: #e83b3b;
	}

	.orange {
		color: #ffa62b;
	}

	.segment {
		display: flex;
		height: 48px;
		margin: 8px 0 9px;
		padding: 4px;
		border-radius: 14px;
		background: #f4f4f4;
		font-size: 21.7px;
		color: #888;
	}

	.segment button {
		width: 121px;
		border-radius: 11px;
	}

	.segment .on {
		background: #fff;
		color: #222;
		font-weight: 500;
	}

	.note {
		justify-content: flex-start;
		gap: 12px;
	}

	.actions {
		margin-top: 54px;
	}

	.actions button {
		display: flex;
		align-items: center;
		justify-content: center;
		height: 43px;
		border-radius: 4px;
	}

	.actions .pick {
		width: 142px;
		gap: 1px;
		background: #e9edff;
		color: #3a62f5;
		font-size: 23.5px;
	}

	.actions .close {
		width: 67px;
		background: #f4f4f4;
		color: #666;
		font-size: 24.5px;
	}

	/* bottom bar */
	footer {
		height: 163px;
		border-top: 8px solid #f4f4f4;
		background: #1a1a1a;
		color: #aaa;
	}

	.bar {
		display: grid;
		grid-template-columns: 143px 158px 158px 152px 157px;
		height: 128px;
		font-size: 19.5px;
	}

	.index {
		padding-top: 10px;
		color: #aaa;
	}

	.index svg {
		margin-left: 60px;
	}

	.index .din {
		color: #00a000;
		transform-origin: left center;
	}

	.point {
		margin: 4px 0 0 25px;
		font-size: 28px;
		line-height: 32px;
		transform: scaleX(0.88);
	}

	.index div {
		display: flex;
		align-items: center;
		gap: 14px;
		height: 28px;
		margin: -4px 0 0 10px;
		padding-top: 8px;
	}

	.index div .din {
		font-size: 23px;
		transform: scaleX(0.97);
	}

	.item {
		display: flex;
		flex-direction: column;
		align-items: center;
		padding-top: 10px;
	}

	.item svg {
		height: 38px;
		fill: none;
		stroke: #999;
		stroke-width: 1.8;
		stroke-linejoin: round;
	}

	.item span {
		margin-top: 10px;
	}

	.home {
		width: 274px;
		height: 10px;
		margin: 0 auto;
		border-radius: 5px;
		background: #fff;
	}
</style>
